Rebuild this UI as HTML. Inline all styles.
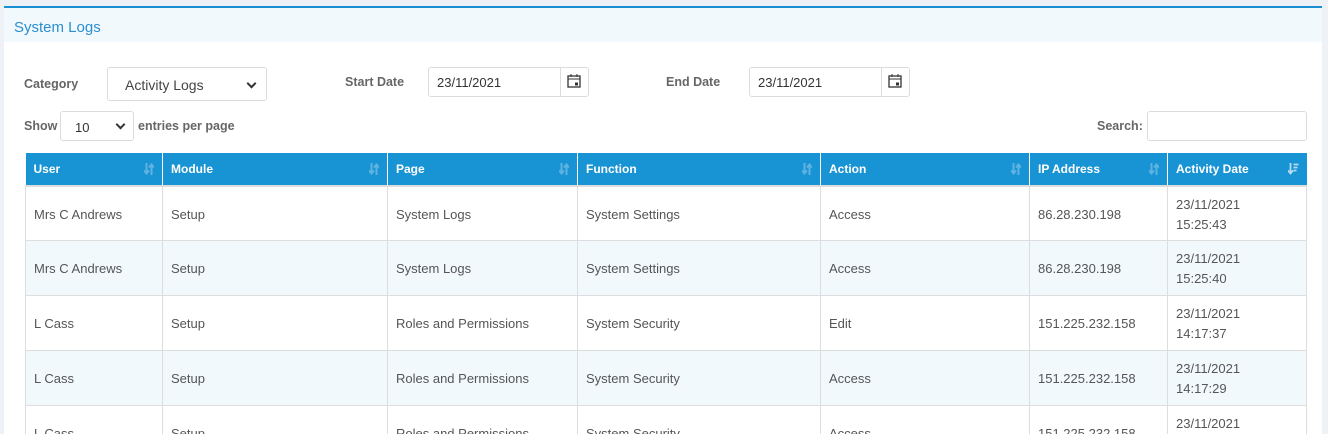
<!DOCTYPE html>
<html><head><style>
*{box-sizing:border-box;margin:0;padding:0}
html,body{width:1328px;height:434px;overflow:hidden}
body{background:#eef1f5;font-family:"Liberation Sans",sans-serif;color:#555;font-size:13px;position:relative}
.panel{position:absolute;left:4px;top:6px;width:1318px;height:430px;background:#fff;border-top:2px solid #1a8fd1;overflow:hidden}
.hdr{height:34px;background:#f2f9fd;color:#2a8fcf;font-size:15px;padding:12px 0 0 10px;line-height:16px}
.abs{position:absolute}
.lbl{font-size:12.5px;font-weight:bold;color:#666}
.box{border:1px solid #dcdcdc;border-radius:3px;background:#fff}
table{position:absolute;left:21px;top:145px;border-collapse:collapse;table-layout:fixed;width:1281px}
th{background:#1893d4;color:#fff;font-size:12px;text-align:left;height:33px;padding:0 8px;border-left:1px solid #fff;border-bottom:2px solid #ddd;position:relative}
th:first-child{border-left:none}
th svg{position:absolute;right:8px;top:10px}
td{height:54.8px;border:1px solid #ddd;padding:2px 8px 0;font-size:13px;color:#555;line-height:20px}
tr:nth-child(odd) td{background:#f2f9fd}
.chev{position:absolute;width:7px;height:7px;border-right:2px solid #333;border-bottom:2px solid #333;transform:rotate(45deg)}
</style></head><body>
<div class="panel">
<div class="hdr">System Logs</div>
<div class="abs lbl" style="left:20px;top:69px">Category</div>
<div class="abs box" style="left:103px;top:59px;width:160px;height:34px;font-size:14px;color:#444;padding:9px 0 0 17px">Activity Logs<span class="chev" style="right:11px;top:12px"></span></div>
<div class="abs lbl" style="left:341px;top:67px">Start Date</div>
<div class="abs box" style="left:424px;top:59px;width:161px;height:30px;font-size:13px;color:#333;padding:7px 0 0 8px">23/11/2021<span style="position:absolute;right:0;top:0;width:28px;height:28px;border-left:1px solid #dcdcdc"><svg width="14" height="14" style="position:absolute;left:6px;top:6px" viewBox="0 0 14 14"><rect x="1" y="2" width="12" height="11" fill="none" stroke="#333" stroke-width="1.3"/><line x1="1" y1="5" x2="13" y2="5" stroke="#333"/><rect x="8" y="8.5" width="3" height="3" fill="#333"/><line x1="4" y1="0" x2="4" y2="3" stroke="#333"/><line x1="10" y1="0" x2="10" y2="3" stroke="#333"/></svg></span></div>
<div class="abs lbl" style="left:662px;top:67px">End Date</div>
<div class="abs box" style="left:745px;top:59px;width:161px;height:30px;font-size:13px;color:#333;padding:7px 0 0 8px">23/11/2021<span style="position:absolute;right:0;top:0;width:28px;height:28px;border-left:1px solid #dcdcdc"><svg width="14" height="14" style="position:absolute;left:6px;top:6px" viewBox="0 0 14 14"><rect x="1" y="2" width="12" height="11" fill="none" stroke="#333" stroke-width="1.3"/><line x1="1" y1="5" x2="13" y2="5" stroke="#333"/><rect x="8" y="8.5" width="3" height="3" fill="#333"/><line x1="4" y1="0" x2="4" y2="3" stroke="#333"/><line x1="10" y1="0" x2="10" y2="3" stroke="#333"/></svg></span></div>
<div class="abs lbl" style="left:20px;top:111px">Show</div>
<div class="abs box" style="left:56px;top:103px;width:74px;height:30px;font-size:13px;color:#333;padding:8px 0 0 14px">10<span class="chev" style="right:9px;top:9px"></span></div>
<div class="abs lbl" style="left:134px;top:111px">entries per page</div>
<div class="abs lbl" style="left:1093px;top:111px">Search:</div>
<div class="abs box" style="left:1143px;top:103px;width:160px;height:30px"></div>
<table>
<colgroup><col style="width:137px"><col style="width:225px"><col style="width:190px"><col style="width:243px"><col style="width:209px"><col style="width:138px"><col style="width:139px"></colgroup>
<tr><th>User<svg width="10" height="12" viewBox="0 0 10 12"><path d="M2.5 0v10M0 7.5l2.5 3 2.5-3M7.5 12V2M5 4.5l2.5-3 2.5 3" stroke="#5fb3e0" stroke-width="2" fill="none"/></svg></th><th>Module<svg width="10" height="12" viewBox="0 0 10 12"><path d="M2.5 0v10M0 7.5l2.5 3 2.5-3M7.5 12V2M5 4.5l2.5-3 2.5 3" stroke="#5fb3e0" stroke-width="2" fill="none"/></svg></th><th>Page<svg width="10" height="12" viewBox="0 0 10 12"><path d="M2.5 0v10M0 7.5l2.5 3 2.5-3M7.5 12V2M5 4.5l2.5-3 2.5 3" stroke="#5fb3e0" stroke-width="2" fill="none"/></svg></th><th>Function<svg width="10" height="12" viewBox="0 0 10 12"><path d="M2.5 0v10M0 7.5l2.5 3 2.5-3M7.5 12V2M5 4.5l2.5-3 2.5 3" stroke="#5fb3e0" stroke-width="2" fill="none"/></svg></th><th>Action<svg width="10" height="12" viewBox="0 0 10 12"><path d="M2.5 0v10M0 7.5l2.5 3 2.5-3M7.5 12V2M5 4.5l2.5-3 2.5 3" stroke="#5fb3e0" stroke-width="2" fill="none"/></svg></th><th>IP Address<svg width="10" height="12" viewBox="0 0 10 12"><path d="M2.5 0v10M0 7.5l2.5 3 2.5-3M7.5 12V2M5 4.5l2.5-3 2.5 3" stroke="#5fb3e0" stroke-width="2" fill="none"/></svg></th><th>Activity Date<svg width="11" height="12" viewBox="0 0 11 12"><path d="M2.5 0v10M0 7.5l2.5 3 2.5-3M5.5 1.5h5M5.5 4.5h4M5.5 7.5h3" stroke="#b5dcf2" stroke-width="1.8" fill="none"/></svg></th></tr>
<tr><td>Mrs C Andrews</td><td>Setup</td><td>System Logs</td><td>System Settings</td><td>Access</td><td>86.28.230.198</td><td>23/11/2021<br>15:25:43</td></tr>
<tr><td>Mrs C Andrews</td><td>Setup</td><td>System Logs</td><td>System Settings</td><td>Access</td><td>86.28.230.198</td><td>23/11/2021<br>15:25:40</td></tr>
<tr><td>L Cass</td><td>Setup</td><td>Roles and Permissions</td><td>System Security</td><td>Edit</td><td>151.225.232.158</td><td>23/11/2021<br>14:17:37</td></tr>
<tr><td>L Cass</td><td>Setup</td><td>Roles and Permissions</td><td>System Security</td><td>Access</td><td>151.225.232.158</td><td>23/11/2021<br>14:17:29</td></tr>
<tr><td>L Cass</td><td>Setup</td><td>Roles and Permissions</td><td>System Security</td><td>Access</td><td>151.225.232.158</td><td>23/11/2021<br>14:17:20</td></tr>
</table>
</div>
</body></html>
